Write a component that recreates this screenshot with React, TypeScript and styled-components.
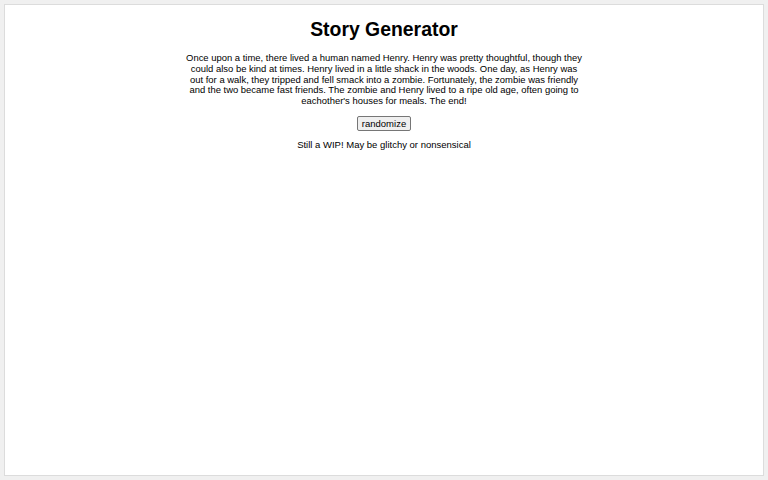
import React from 'react';
import styled, { createGlobalStyle } from 'styled-components';

const GlobalStyle = createGlobalStyle`
  html, body {
    margin: 0;
    padding: 0;
    height: 100%;
    background: #f0f0f0;
  }

  #root {
    height: 100%;
  }
`;

const story =
  "Once upon a time, there lived a human named Henry. Henry was pretty thoughtful, though they could also be kind at times. Henry lived in a little shack in the woods. One day, as Henry was out for a walk, they tripped and fell smack into a zombie. Fortunately, the zombie was friendly and the two became fast friends. The zombie and Henry lived to a ripe old age, often going to eachother's houses for meals. The end!";

export default function App() {
  return (
    <>
      <GlobalStyle />
      <Page>
        <Frame>
          <Title>Story Generator</Title>
          <Story>{story}</Story>
          <Button type='button'>randomize</Button>
          <Note>Still a WIP! May be glitchy or nonsensical</Note>
        </Frame>
      </Page>
    </>
  );
}

const Page = styled.div`
  box-sizing: border-box;
  height: 100%;
  padding: 4px;
`;

const Frame = styled.main`
  box-sizing: border-box;
  height: 100%;
  background: #ffffff;
  border: 1px solid #dcdcdc;
  display: flex;
  flex-direction: column;
  align-items: center;
  font-family: 'Liberation Sans', Arial, sans-serif;
  color: #000;
`;

const Title = styled.h1`
  margin: 12px 0 0;
  font-size: 19.4px;
  line-height: 24px;
  font-weight: bold;
`;

const Story = styled.p`
  margin: 12px 0 0;
  width: 399px;
  text-align: center;
  font-size: 9.45px;
  line-height: 10.75px;
`;

const Button = styled.button`
  margin-top: 9px;
  font-family: inherit;
  font-size: 9.5px;
  padding: 1px 4px;
  background: #efefef;
  border: 1px solid #767676;
  border-radius: 2px;
  color: #000;
`;

const Note = styled.p`
  margin: 8px 0 0;
  font-size: 9.5px;
`;
